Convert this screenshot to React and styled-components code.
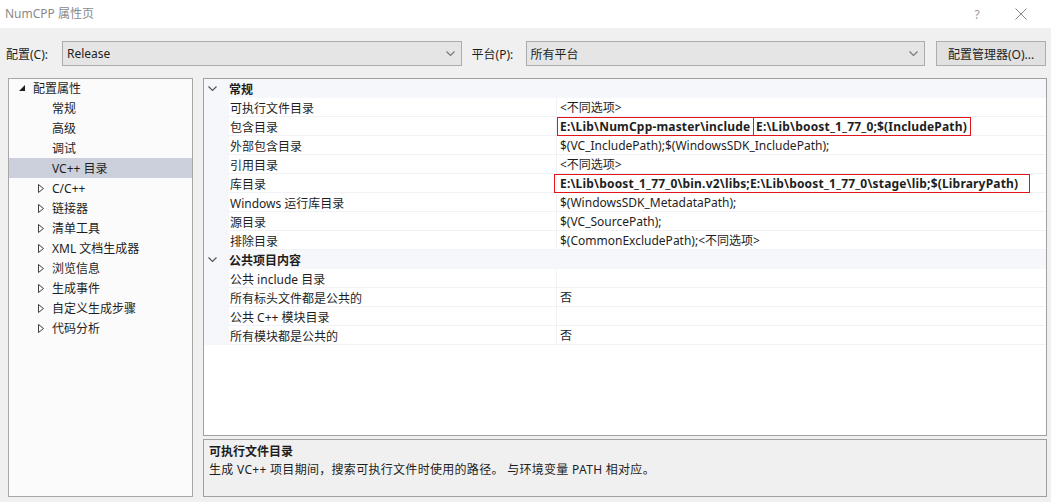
import styled, { createGlobalStyle } from "styled-components";

const GlobalStyle = createGlobalStyle`
  html, body {
    margin: 0;
    padding: 0;
    background: #f0f0f0;
  }
  * {
    box-sizing: border-box;
  }
`;

const Window = styled.div`
  width: 1051px;
  height: 502px;
  display: flex;
  flex-direction: column;
  background: #f0f0f0;
  font-family: "Noto Sans", "Noto Sans CJK SC", sans-serif;
  font-size: 12px;
  color: #1e1e1e;
  overflow: hidden;
`;

const TitleBar = styled.div`
  height: 28px;
  background: #ffffff;
  display: flex;
  align-items: center;
  padding: 0 8px 0 5px;
`;

const Title = styled.div`
  flex: 1;
  color: #8a8a8a;
  font-size: 12px;
  margin-top: -2px;
`;

const TitleButton = styled.div`
  width: 44px;
  display: flex;
  justify-content: center;
  color: #9a9a9a;
  font-size: 12px;
`;

const Toolbar = styled.div`
  height: 50px;
  display: flex;
  align-items: center;
  padding: 1px 5px 0 6px;
`;

const Label = styled.div`
  width: ${(p) => p.w}px;
  white-space: nowrap;
`;

const Combo = styled.div`
  width: ${(p) => p.w}px;
  height: 25px;
  background: #e5e5e5;
  border: 1px solid #acacac;
  display: flex;
  align-items: center;
  padding: 0 6px 0 4px;
  margin-right: ${(p) => p.mr || 0}px;
`;

const ComboText = styled.div`
  flex: 1;
`;

const ManagerButton = styled.div`
  width: 110px;
  height: 25px;
  background: #e1e1e1;
  border: 1px solid #adadad;
  display: flex;
  align-items: center;
  justify-content: center;
`;

const Main = styled.div`
  flex: 1;
  display: flex;
  gap: 10px;
  padding: 0 4px 5px 8px;
  min-height: 0;
`;

const Tree = styled.div`
  width: 185px;
  background: #fbfbfb;
  border: 1px solid #a7a7a7;
`;

const TreeList = styled.div`
  margin-top: -1px;
`;

const TreeRow = styled.div`
  height: 20px;
  display: flex;
  align-items: center;
  padding-left: ${(p) => p.indent}px;
  background: ${(p) => (p.selected ? "#ccd0dc" : "transparent")};
  white-space: nowrap;
`;

const Arrow = styled.span`
  width: ${(p) => p.w}px;
  display: inline-flex;
  align-items: center;
`;

const RightCol = styled.div`
  flex: 1;
  display: flex;
  flex-direction: column;
  gap: 3px;
`;

const Grid = styled.div`
  flex: 1;
  background: #ffffff;
  border: 1px solid #a0a0a0;
`;

const CategoryRow = styled.div`
  height: 19px;
  display: flex;
  align-items: center;
  background: #f5f7fb;
  font-weight: bold;
`;

const Gutter = styled.div`
  width: 25px;
  height: 100%;
  display: flex;
  align-items: center;
  padding-left: 4px;
  background: #f5f7fb;
`;

const PropRow = styled.div`
  height: 19px;
  display: flex;
  align-items: center;
`;

const NameCell = styled.div`
  width: 327px;
  height: 100%;
  display: flex;
  align-items: center;
  padding-left: 1px;
  border-bottom: 1px solid #f1f2f5;
  border-top: 1px solid #ffffff;
  white-space: nowrap;
`;

const ValueCell = styled.div`
  flex: 1;
  height: 100%;
  display: flex;
  align-items: center;
  padding-left: 3px;
  border-left: 1px solid #f1f2f5;
  border-bottom: 1px solid #f1f2f5;
  white-space: nowrap;
  font-weight: ${(p) => (p.bold ? "bold" : "normal")};
  letter-spacing: ${(p) => (p.bold ? "0.18px" : "0")};
`;

const Marked = styled.span`
  flex: none;
  width: ${(p) => p.w}px;
  height: 19px;
  border: 1px solid #e0161c;
  display: inline-flex;
  align-items: center;
  overflow: hidden;
  padding-left: ${(p) => p.pl || 1}px;
  margin-left: ${(p) => p.ml || 0}px;
`;

const Description = styled.div`
  height: 58px;
  background: #f0f0f0;
  border: 1px solid #a0a0a0;
  padding: 3px 5px;
  line-height: 18px;
`;

const DescTitle = styled.div`
  font-weight: bold;
`;

const DescText = styled.div`
  letter-spacing: 0.3px;
`;

const Expanded = () => (
  <svg width="7" height="7" viewBox="0 0 7 7">
    <polygon points="6,0 6,6 0,6" fill="#1e1e1e" />
  </svg>
);

const Collapsed = () => (
  <svg width="6" height="9" viewBox="0 0 6 9">
    <polygon points="0.5,0.5 5.5,4.5 0.5,8.5" fill="none" stroke="#404040" strokeWidth="1" />
  </svg>
);

const Chevron = ({ color = "#555" }) => (
  <svg width="9" height="6" viewBox="0 0 9 6">
    <polyline points="0.5,0.5 4.5,4.5 8.5,0.5" fill="none" stroke={color} strokeWidth="1.2" />
  </svg>
);

const CloseIcon = () => (
  <svg width="12" height="12" viewBox="0 0 12 12">
    <path d="M0.5 0.5 L11.5 11.5 M11.5 0.5 L0.5 11.5" stroke="#8a8a8a" strokeWidth="1" />
  </svg>
);

const treeItems = [
  { text: "常规" },
  { text: "高级" },
  { text: "调试" },
  { text: "VC++ 目录", selected: true },
  { text: "C/C++", arrow: true },
  { text: "链接器", arrow: true },
  { text: "清单工具", arrow: true },
  { text: "XML 文档生成器", arrow: true },
  { text: "浏览信息", arrow: true },
  { text: "生成事件", arrow: true },
  { text: "自定义生成步骤", arrow: true },
  { text: "代码分析", arrow: true },
];

const general = [
  ["可执行文件目录", "<不同选项>"],
  ["包含目录", "include"],
  ["外部包含目录", "$(VC_IncludePath);$(WindowsSDK_IncludePath);"],
  ["引用目录", "<不同选项>"],
  ["库目录", "lib"],
  ["Windows 运行库目录", "$(WindowsSDK_MetadataPath);"],
  ["源目录", "$(VC_SourcePath);"],
  ["排除目录", "$(CommonExcludePath);<不同选项>"],
];

const shared = [
  ["公共 include 目录", ""],
  ["所有标头文件都是公共的", "否"],
  ["公共 C++ 模块目录", ""],
  ["所有模块都是公共的", "否"],
];

function Value({ value }) {
  if (value === "include") {
    return (
      <ValueCell bold style={{ paddingLeft: 0 }}>
        <Marked w={197} pl={2}>E:\Lib\NumCpp-master\include</Marked>
        <Marked w={218} pl={2} ml={-1}>E:\Lib\boost_1_77_0;$(IncludePath)</Marked>
      </ValueCell>
    );
  }
  if (value === "lib") {
    return (
      <ValueCell bold style={{ paddingLeft: 0 }}>
        <Marked w={476} ml={-3} pl={5}>
          E:\Lib\boost_1_77_0\bin.v2\libs;E:\Lib\boost_1_77_0\stage\lib;$(LibraryPath)
        </Marked>
      </ValueCell>
    );
  }
  return <ValueCell>{value}</ValueCell>;
}

function Section({ title, rows }) {
  return (
    <>
      <CategoryRow>
        <Gutter>
          <Chevron />
        </Gutter>
        {title}
      </CategoryRow>
      {rows.map(([name, value]) => (
        <PropRow key={name}>
          <Gutter />
          <NameCell>{name}</NameCell>
          <Value value={value} />
        </PropRow>
      ))}
    </>
  );
}

export default function App() {
  return (
    <Window>
      <GlobalStyle />
      <TitleBar>
        <Title>NumCPP 属性页</Title>
        <TitleButton>?</TitleButton>
        <TitleButton>
          <CloseIcon />
        </TitleButton>
      </TitleBar>

      <Toolbar>
        <Label w={56}>配置(C):</Label>
        <Combo w={400} mr={10}>
          <ComboText>Release</ComboText>
          <Chevron color="#777" />
        </Combo>
        <Label w={54}>平台(P):</Label>
        <Combo w={400} mr={11}>
          <ComboText>所有平台</ComboText>
          <Chevron color="#777" />
        </Combo>
        <ManagerButton>配置管理器(O)...</ManagerButton>
      </Toolbar>

      <Main>
        <Tree>
          <TreeList>
            <TreeRow indent={10}>
              <Arrow w={14}>
                <Expanded />
              </Arrow>
              配置属性
            </TreeRow>
            {treeItems.map((item) => (
              <TreeRow key={item.text} indent={29} selected={item.selected}>
                <Arrow w={14}>{item.arrow && <Collapsed />}</Arrow>
                {item.text}
              </TreeRow>
            ))}
          </TreeList>
        </Tree>

        <RightCol>
          <Grid>
            <Section title="常规" rows={general} />
            <Section title="公共项目内容" rows={shared} />
          </Grid>
          <Description>
            <DescTitle>可执行文件目录</DescTitle>
            <DescText>生成 VC++ 项目期间，搜索可执行文件时使用的路径。 与环境变量 PATH 相对应。</DescText>
          </Description>
        </RightCol>
      </Main>
    </Window>
  );
}
